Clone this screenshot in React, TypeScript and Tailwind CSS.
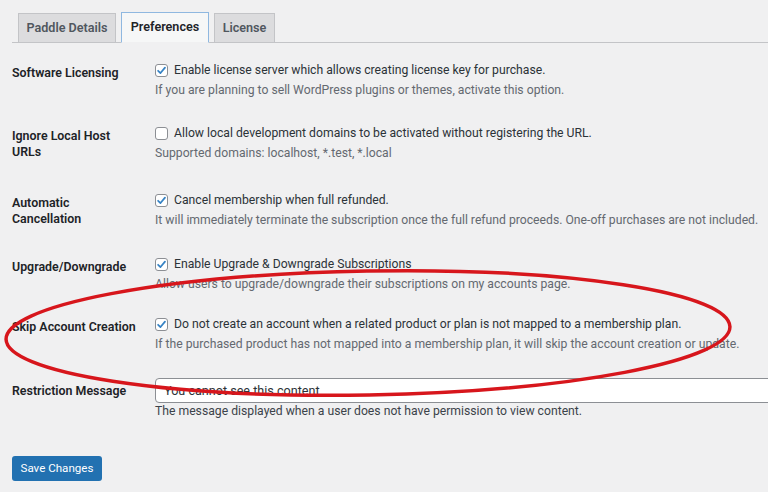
import * as React from "react"

type Row = {
  label: string
  text: string
  hint: string
  checked: boolean
  pad: string
}

const rows: Row[] = [
  {
    label: "Software Licensing",
    text: "Enable license server which allows creating license key for purchase.",
    hint: "If you are planning to sell WordPress plugins or themes, activate this option.",
    checked: true,
    pad: "pt-[17px]",
  },
  {
    label: "Ignore Local Host URLs",
    text: "Allow local development domains to be activated without registering the URL.",
    hint: "Supported domains: localhost, *.test, *.local",
    checked: false,
    pad: "pt-[23px]",
  },
  {
    label: "Automatic Cancellation",
    text: "Cancel membership when full refunded.",
    hint: "It will immediately terminate the subscription once the full refund proceeds. One-off purchases are not included.",
    checked: true,
    pad: "pt-[27px]",
  },
  {
    label: "Upgrade/Downgrade",
    text: "Enable Upgrade & Downgrade Subscriptions",
    hint: "Allow users to upgrade/downgrade their subscriptions on my accounts page.",
    checked: true,
    pad: "pt-[24px]",
  },
  {
    label: "Skip Account Creation",
    text: "Do not create an account when a related product or plan is not mapped to a membership plan.",
    hint: "If the purchased product has not mapped into a membership plan, it will skip the account creation or update.",
    checked: true,
    pad: "pt-[20px]",
  },
]

function Checkbox({ checked }: { checked: boolean }) {
  return (
    <span className="flex h-[13px] w-[13px] shrink-0 items-center justify-center rounded-[3px] border border-[#8c8f94] bg-white">
      {checked && (
        <svg viewBox="0 0 12 12" className="h-[11px] w-[11px]">
          <path d="M2.3 6.3 L4.9 8.8 L9.8 2.9" fill="none" stroke="#3582c4" strokeWidth="1.9" strokeLinecap="round" strokeLinejoin="round" />
        </svg>
      )}
    </span>
  )
}

export default function App() {
  return (
    <div className="relative h-[492px] w-[768px] overflow-hidden bg-[#f0f0f1] font-['Roboto',sans-serif] text-[12.2px] text-[#2c3338]">
      <div className="ml-[12px] flex items-end gap-[5px] border-b border-[#c3c4c7] pl-[6px] pt-[12px]">
        <div className="-mb-px flex h-[30px] w-[98px] items-center justify-center border border-[#c3c4c7] bg-[#dcdcde] text-[12.6px] font-semibold text-[#50575e]">
          Paddle Details
        </div>
        <div className="-mb-px flex h-[31px] w-[88px] items-center justify-center border border-[#8fb8e0] border-b-[#f0f0f1] bg-[#f6f7f7] text-[12.6px] font-semibold text-[#1d2327]">
          Preferences
        </div>
        <div className="-mb-px flex h-[30px] w-[61px] items-center justify-center border border-[#c3c4c7] bg-[#dcdcde] text-[12.6px] font-semibold text-[#50575e]">
          License
        </div>
      </div>

      <div className="px-[12px]">
        {rows.map((r) => (
          <div key={r.label} className={`flex ${r.pad}`}>
            <div className="mt-[5px] w-[143px] shrink-0 pr-[16px] text-[12.4px] font-semibold leading-[16px] text-[#1d2327]">
              {r.label}
            </div>
            <div className="flex flex-col whitespace-nowrap">
              <label className="flex h-[20px] items-center gap-[6px] leading-[20px]">
                <Checkbox checked={r.checked} />
                <span>{r.text}</span>
              </label>
              <p className="h-[20px] leading-[20px] text-[#646970]">{r.hint}</p>
            </div>
          </div>
        ))}

        <div className="flex pt-[24px]">
          <div className="mt-[5px] w-[143px] shrink-0 pr-[16px] text-[12.4px] font-semibold leading-[16px] text-[#1d2327]">
            Restriction Message
          </div>
          <div className="flex min-w-0 flex-1 flex-col whitespace-nowrap">
            <input
              readOnly
              value="You cannot see this content"
              className="h-[25px] w-[640px] rounded-[4px] border border-[#8c8f94] bg-white px-[8px] text-[12.6px] text-[#2c3338] outline-none"
            />
            <p className="h-[16px] leading-[16px] text-[#3c434a]">The message displayed when a user does not have permission to view content.</p>
          </div>
        </div>

        <button className="mt-[37px] flex h-[25px] w-[90px] items-center justify-center rounded-[3px] bg-[#2271b1] text-[11.6px] text-white">
          Save Changes
        </button>
      </div>

      <svg className="pointer-events-none absolute inset-0" width="768" height="492" viewBox="0 0 768 492">
        <ellipse cx="368" cy="333" rx="362" ry="62" transform="rotate(-1 368 333)" fill="none" stroke="#d7161c" strokeWidth="3.5" />
      </svg>
    </div>
  )
}
